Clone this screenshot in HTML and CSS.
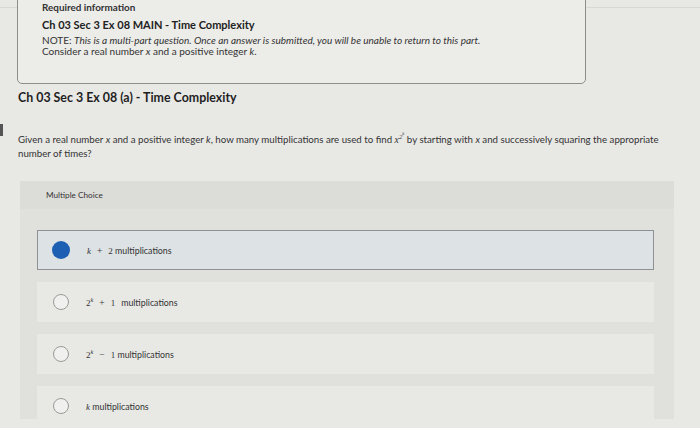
FILE: index.html
```html
<!DOCTYPE html>
<html>
<head>
<meta charset="utf-8">
<link rel="stylesheet" href="styles.css">
</head>
<body>
<div class="topline"></div>
<div class="info">
  <div class="req">Required information</div>
  <div class="main-title">Ch 03 Sec 3 Ex 08 MAIN - Time Complexity</div>
  <div class="note">NOTE: <i>This is a multi-part question. Once an answer is submitted, you will be unable to return to this part.</i></div>
  <div class="note">Consider a real number <i>x</i> and a positive integer <i>k</i>.</div>
</div>
<div class="content">
  <span class="leftmark"></span>
  <h2 class="qtitle">Ch 03 Sec 3 Ex 08 (a) - Time Complexity</h2>
  <p class="question">Given a real number <i>x</i> and a positive integer <i>k</i>, how many multiplications are used to find <span class="qm">x<sup>2<sup>k</sup></sup></span> by starting with <i>x</i> and successively squaring the appropriate<br>number of times?</p>
  <div class="panel">
    <div class="panel-head">Multiple Choice</div>
    <div class="options">
      <div class="opt selected"><span class="radio on"></span><span class="otext"><span class="m it">k</span><span class="op">+</span><span class="m">2</span> multiplications</span></div>
      <div class="opt"><span class="radio"></span><span class="otext"><span class="m">2<sup class="it">k</sup></span><span class="op">+</span><span class="m">1</span><span class="gap"></span>multiplications</span></div>
      <div class="opt"><span class="radio"></span><span class="otext"><span class="m">2<sup class="it">k</sup></span><span class="op">&minus;</span><span class="m">1</span> multiplications</span></div>
      <div class="opt"><span class="radio"></span><span class="otext"><span class="m it">k</span> multiplications</span></div>
    </div>
  </div>
</div>
</body>
</html>
```
FILE: styles.css
```css
html, body {
  margin: 0;
  padding: 0;
}
body {
  width: 700px;
  height: 428px;
  overflow: hidden;
  background: #e8e8e5;
  font-family: Lato, "Open Sans", sans-serif;
  color: #2b2b2b;
  position: relative;
}
.topline {
  position: absolute;
  left: 0;
  right: 0;
  top: 7px;
  height: 1px;
  background: #d8d8d5;
}
.info {
  position: relative;
  margin: -6px 0 0 17px;
  width: 543px;
  height: 88px;
  padding: 0 0 0 24px;
  border: 1px solid #8d8d8a;
  border-radius: 5px;
  background: #ecece9;
}
.req {
  font-weight: 700;
  font-size: 9.9px;
  line-height: 12px;
  margin-top: 6px;
  color: #333;
}
.main-title {
  font-weight: 700;
  font-size: 11px;
  line-height: 14px;
  margin-top: 5px;
  color: #222;
}
.note {
  font-size: 10px;
  line-height: 11px;
  color: #333;
}
.main-title + .note {
  margin-top: 3px;
}
.content {
  position: relative;
  padding: 0 0 0 18px;
}
.leftmark {
  position: absolute;
  left: 0;
  top: 33px;
  width: 3px;
  height: 12px;
  background: #555;
}
.qtitle {
  margin: 7px 0 0 0;
  font-size: 12.4px;
  line-height: 14px;
  font-weight: 700;
  color: #1f1f1f;
}
.question {
  margin: 28px 0 0 0;
  width: 670px;
  font-size: 9.7px;
  line-height: 12.5px;
  color: #333;
}
.qm {
  font-family: "Liberation Serif", serif;
  font-style: italic;
}
.m {
  font-family: "Liberation Serif", serif;
  font-size: 9px;
}
.it {
  font-style: italic;
}
sup {
  font-size: 70%;
  line-height: 0;
  vertical-align: 4px;
}
.panel {
  margin: 22px 0 0 2px;
  width: 654px;
  height: 238px;
  background: #e0e0dd;
}
.panel-head {
  height: 28px;
  padding-left: 26px;
  font-size: 8.2px;
  line-height: 28px;
  background: #dcdcd9;
  color: #333;
}
.options {
  display: flex;
  flex-direction: column;
  gap: 12px;
  padding: 21px 0 0 17px;
}
.opt {
  width: 617px;
  height: 40px;
  display: flex;
  align-items: center;
  background: #e8e8e5;
  box-sizing: border-box;
  border: 1px solid transparent;
}
.opt.selected {
  background: #dde2e4;
  border-color: #8e9294;
}
.radio {
  width: 14px;
  height: 14px;
  border: 1.5px solid #9a9a98;
  border-radius: 50%;
  margin-left: 15px;
  background: #f0f0ee;
}
.radio.on {
  width: 18px;
  height: 18px;
  border: none;
  margin-left: 14px;
  background: #1d5fb3;
}
.otext {
  margin-left: 17px;
  font-size: 8.8px;
  color: #333;
}
.op {
  font-family: "Liberation Serif", serif;
  font-size: 9.5px;
  margin: 0 6px;
}
.gap {
  display: inline-block;
  width: 6px;
}
```
